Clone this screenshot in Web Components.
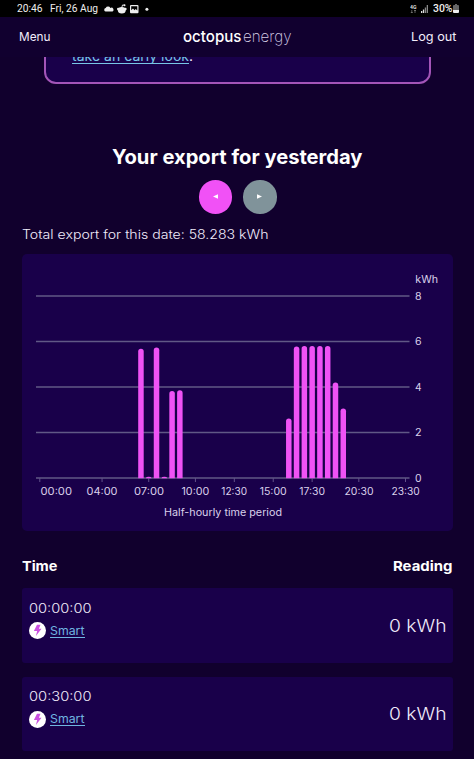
<!DOCTYPE html>
<html lang="en">
<head>
<meta charset="utf-8">
<title>Octopus Energy</title>
<style>
html,body{margin:0;height:100%;background:#11002d}
body{font-family:Inter,"Noto Sans",sans-serif;color:#f2edfb;overflow:hidden}
</style>
</head>
<body>
<octo-app></octo-app>
<script>
const define=(name,html,setup)=>customElements.define(name,class extends HTMLElement{
  connectedCallback(){
    if(this.shadowRoot)return;
    const root=this.attachShadow({mode:"open"});
    root.innerHTML=html;
    if(setup)setup.call(this,root);
  }
});

// A single line of text whose glyphs are widened or narrowed to an exact width.
define("fit-text",`<style>
:host{display:block;white-space:nowrap;line-height:1.25;flex:none}
span{display:inline-block;transform-origin:0 50%}
</style><span></span>`,function(root){
  const s=root.querySelector("span"),w=+this.getAttribute("w"),t=this.getAttribute("text")||"";
  s.textContent=t;
  this.style.fontSize=this.getAttribute("size")+"px";
  this.style.width=w+"px";
  const natural=s.getBoundingClientRect().width;
  if(natural)s.style.transform=`scaleX(${w/natural})`;
});

define("status-bar",`<style>
:host{display:flex;align-items:center;height:17px;background:#000;padding:0 15px 0 16.500px;font-family:Roboto,sans-serif;color:#eee;font-weight:450;box-sizing:border-box}
.date{margin-left:7.500px}
.icons{margin-left:6.500px;flex:1}
svg{display:block}
.net{margin-right:4px}.pct{margin-left:5px;font-weight:500}.bat{margin-left:1px}
</style>
<fit-text w="25.5" size="10.8" text="20:46"></fit-text>
<fit-text class="date" w="48" size="10.8" text="Fri, 26 Aug"></fit-text>
<div class="icons"><svg width="46" height="12" viewBox="0 0 46 12" fill="#eee">
<path d="M1.500 8.500a1.800 1.800 0 0 1 .2-3.500A2.600 2.600 0 0 1 6.400 5 1.900 1.900 0 0 1 8.600 8.500Z"/>
<ellipse cx="17.800" cy="7.300" rx="3.900" ry="3.300"/><circle cx="14.200" cy="6" r="1.200"/><circle cx="21.400" cy="6" r="1.200"/><circle cx="20.500" cy="2.200" r="1"/><path d="M17.800 4.500 18.500 2 20.500 2.200" fill="none" stroke="#eee" stroke-width=".9"/>
<path fill-rule="evenodd" d="M27 2h6.500q1 0 1 1v6.200q0 1-1 1H27q-1 0-1-1V3q0-1 1-1Zm.2 1.200v4L29 5.500l1.500 1.700 1.200-1.300 1.600 1.700V3.200Z"/>
<circle cx="42.900" cy="6.300" r="1.500"/></svg></div>
<svg class="net" width="7" height="10" viewBox="0 0 7 10"><text x="0" y="4.800" font-size="5" font-weight="700" textLength="6.500" lengthAdjust="spacingAndGlyphs" fill="#ddd">4G</text><path d="M1.800 6v3M.8 8l1 1 1-1M5 9V6M4 7l1-1 1 1" fill="none" stroke="#999" stroke-width=".6"/></svg>
<svg width="7" height="8" viewBox="0 0 7 8"><path d="M0 6h1.300v2H0zM1.900 4.500h1.300V8H1.900z" fill="#ddd"/><path d="M3.800 2.500h1.300V8H3.800zM5.700 0H7v8H5.700z" fill="#888"/></svg>
<fit-text class="pct" w="19.500" size="11" text="30%"></fit-text>
<svg class="bat" width="6" height="9" viewBox="0 0 6 9"><path d="M2 0h2v1h1q1 0 1 1v4H0V2q0-1 1-1h1z" fill="#666"/><path d="M0 6h6v2q0 1-1 1H1Q0 9 0 8z" fill="#eee"/></svg>`);

define("site-header",`<style>
:host{display:grid;grid-template-columns:1fr auto 1fr;align-items:center;height:40px;padding:0 18px 1px 18.500px;box-sizing:border-box;background:#11002f}
.logo{display:flex;gap:1px;color:#fff;padding-top:1px}
.o{font-weight:500}.e{font-weight:200;color:#d8cfe6}
.out{justify-self:end}
</style>
<fit-text w="31.500" size="12" text="Menu"></fit-text>
<div class="logo"><fit-text class="o" w="58.500" size="15.700" text="octopus"></fit-text><fit-text class="e" w="48.500" size="15.700" text="energy"></fit-text></div>
<fit-text class="out" w="45.500" size="12" text="Log out"></fit-text>`);

define("early-card",`<style>
:host{display:block;height:27px;margin:0 43px 0 44px;overflow:hidden}
.card{box-sizing:border-box;height:67px;margin-top:-40px;border:2px solid #a355b8;border-radius:12px;background:#19004a;padding:28.500px 0 0 26px;display:flex}
a{color:#77c5e6;border-bottom:1.500px solid #77c5e6;height:15px}
fit-text{line-height:17px}
</style><div class="card"><a><fit-text w="117" size="13.500" text="take an early look"></fit-text></a><fit-text w="4" size="13.500" text="."></fit-text></div>`);

define("round-button",`<style>
:host{display:grid;place-items:center;width:33.500px;height:33.500px;border-radius:50%;background:#f151f6}
:host([muted]){background:#80939a}
:host([muted]) svg{transform:scaleX(-1)}
</style><svg width="5" height="5" viewBox="0 0 5 5"><path d="M0 2.500 5 .2v4.600z" fill="#fff"/></svg>`);

define("export-chart",`<style>
:host{display:block;height:277px;margin:0 21px 0 22px;border-radius:5px;background:#19004a}
svg{display:block}
text{font-size:10.1px;fill:#d9d0ea}
</style><svg width="431" height="277" viewBox="22 254 431 277"></svg>`,function(root){
  const y=v=>478-v*22.750, x=i=>39.800+i*7.781;
  let s="";
  for(const v of [8,6,4,2,0]){
    s+=`<path d="M36 ${y(v)}H409.500" stroke="#605886" stroke-width="1.300"/><text x="415" y="${y(v)+3.700}" textLength="6.600" lengthAdjust="spacingAndGlyphs">${v}</text>`;
  }
  s+=`<text x="415.300" y="282.500" textLength="22.700" lengthAdjust="spacingAndGlyphs">kWh</text>`;
  for(const i of [0,8,14,20,25,30,35,41,47])s+=`<path d="M${x(i)} 478v4" stroke="#62518a"/>`;
  const readings={13:5.680,14:.06,15:5.740,16:.06,17:3.820,18:3.860,32:2.620,33:5.780,34:5.800,35:5.800,36:5.800,37:5.800,38:4.200,39:3.060};
  for(const [i,v] of Object.entries(readings)){
    const l=x(+i)-2.750,t=y(v),r=Math.min(2.750,478-t);
    s+=`<path d="M${l} 478.300V${t+r}q0-${r} 2.750-${r}t2.750 ${r}V478.300z" fill="#ef52f5"/>`;
  }
  for(const [t,a,b] of [["00:00",40.500,72],["04:00",86.500,117.500],["07:00",134,164],["10:00",181.500,209.300],["12:30",221.300,247],["15:00",259.700,286.700],["17:30",299.300,325],["20:30",344.500,373.500],["23:30",391.500,419.700]])
    s+=`<text x="${a}" y="494.700" textLength="${b-a}" lengthAdjust="spacingAndGlyphs">${t}</text>`;
  s+=`<text x="164" y="516" textLength="118" lengthAdjust="spacingAndGlyphs">Half-hourly time period</text>`;
  root.querySelector("svg").innerHTML=s;
});

customElements.define("reading-row",class extends HTMLElement{
  connectedCallback(){
    if(this.shadowRoot)return;
    this.attachShadow({mode:"open"}).innerHTML=`<style>
:host{display:flex;justify-content:space-between;box-sizing:border-box;height:74.500px;margin:0 21px 14px 22px;padding:12.500px 7px 0;border-radius:3px;background:#19004a}
.t{font-weight:350}
.tag{display:flex;align-items:center;gap:4px;margin-top:5.500px}
a{color:#6fb4e0;border-bottom:1px solid #6fb4e0;height:13px;display:block}
a fit-text{line-height:14px}
.v{margin-top:14px;font-weight:300}
svg{display:block}
</style>
<div><fit-text class="t" w="62.500" size="12.800" text="${this.getAttribute("time")}"></fit-text>
<div class="tag"><svg width="17" height="17" viewBox="0 0 17 17"><circle cx="8.500" cy="8.500" r="8.500" fill="#fff"/><path d="M8 2.800h3.500L9.900 6.800h2.600L6.900 14l1.300-5H4.900z" fill="#c94fe0"/></svg><a><fit-text w="34.500" size="11.600" text="Smart"></fit-text></a></div></div>
<fit-text class="v" w="57.500" size="17.300" text="0 kWh"></fit-text>`;
  }
});

define("octo-app",`<style>
:host{display:flex;flex-direction:column;width:474px;height:759px;overflow:hidden}
main{flex:1;overflow:hidden}
.title{margin:61px auto 0;font-weight:680;color:#fff}
.nav{display:flex;justify-content:center;gap:11px;margin:10.700px 0 0 1px}
.total{margin:12px 0 11.800px 22px;font-weight:350;line-height:17px}
.cols{display:flex;justify-content:space-between;margin:25.500px 21.500px 12px 22px;font-weight:680;color:#fff;height:19.500px;align-items:center}
</style>
<status-bar></status-bar><site-header></site-header>
<main>
<early-card></early-card>
<fit-text class="title" w="250.500" size="19.600" text="Your export for yesterday"></fit-text>
<div class="nav"><round-button></round-button><round-button muted></round-button></div>
<fit-text class="total" w="246.500" size="12.700" text="Total export for this date: 58.283 kWh"></fit-text>
<export-chart></export-chart>
<div class="cols"><fit-text w="35.500" size="13.700" text="Time"></fit-text><fit-text w="59.500" size="13.700" text="Reading"></fit-text></div>
<reading-row time="00:00:00"></reading-row>
<reading-row time="00:30:00"></reading-row>
</main>`);
</script>
</body>
</html>
